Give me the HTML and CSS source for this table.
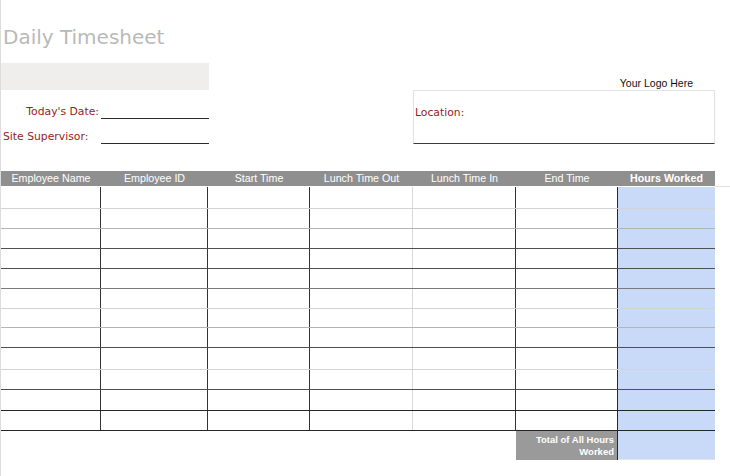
FILE: index.html
```html
<!DOCTYPE html>
<html lang="en">
<head>
<meta charset="utf-8">
<title>Daily Timesheet</title>
<link rel="stylesheet" href="styles.css">
</head>
<body>
<div class="page">
  <div class="top">
    <div class="left">
      <h1 class="title">Daily Timesheet</h1>
      <div class="graybar"></div>
      <div class="field field-date">
        <span class="label label-right">Today's Date:</span>
        <span class="line"></span>
      </div>
      <div class="field field-sup">
        <span class="label">Site Supervisor:</span>
        <span class="line"></span>
      </div>
    </div>
    <div class="right">
      <div class="logo">Your Logo Here</div>
      <div class="location"><span class="label">Location:</span></div>
    </div>
  </div>

  <div class="sheet">
    <div class="thead">
      <div class="cols head">
        <div>Employee Name</div>
        <div>Employee ID</div>
        <div>Start Time</div>
        <div>Lunch Time Out</div>
        <div>Lunch Time In</div>
        <div>End Time</div>
        <div class="bold">Hours Worked</div>
      </div>
      <div class="tail"></div>
    </div>

    <div class="cols row h22 ln-light"><div></div><div></div><div></div><div></div><div></div><div></div><div class="blue"></div></div>
    <div class="cols row ln-mid"><div></div><div></div><div></div><div></div><div></div><div></div><div class="blue"></div></div>
    <div class="cols row ln-dark"><div></div><div></div><div></div><div></div><div></div><div></div><div class="blue"></div></div>
    <div class="cols row ln-dark"><div></div><div></div><div></div><div></div><div></div><div></div><div class="blue"></div></div>
    <div class="cols row ln-mid2"><div></div><div></div><div></div><div></div><div></div><div></div><div class="blue"></div></div>
    <div class="cols row ln-light"><div></div><div></div><div></div><div></div><div></div><div></div><div class="blue"></div></div>
    <div class="cols row h19 ln-mid"><div></div><div></div><div></div><div></div><div></div><div></div><div class="blue"></div></div>
    <div class="cols row ln-dark"><div></div><div></div><div></div><div></div><div></div><div></div><div class="blue"></div></div>
    <div class="cols row h22 ln-light"><div></div><div></div><div></div><div></div><div></div><div></div><div class="blue"></div></div>
    <div class="cols row ln-dark"><div></div><div></div><div></div><div></div><div></div><div></div><div class="blue"></div></div>
    <div class="cols row h21 ln-black"><div></div><div></div><div></div><div></div><div></div><div></div><div class="blue"></div></div>
    <div class="cols row ln-black"><div></div><div></div><div></div><div></div><div></div><div></div><div class="blue"></div></div>

    <div class="cols total">
      <div></div><div></div><div></div><div></div><div></div>
      <div class="total-label">Total of All Hours<br>Worked</div>
      <div class="blue"></div>
    </div>
  </div>
</div>
</body>
</html>
```

FILE: styles.css
```css
* { box-sizing: border-box; }
html, body { margin: 0; padding: 0; background: #fff; }
body { font-family: "DejaVu Sans", Verdana, sans-serif; }

.page {
  width: 730px;
  height: 476px;
  border-left: 1px solid #dcdcdc;
  overflow: hidden;
}

.top { display: flex; padding-top: 25px; }
.left { width: 208px; }
.right { width: 302px; margin-left: 204px; margin-top: 52px; }

.title {
  margin: 0;
  padding-left: 2px;
  font-size: 20px;
  line-height: 24px;
  font-weight: normal;
  color: #b9b9b9;
  white-space: nowrap;
}

.graybar {
  margin-top: 14px;
  margin-left: -1px;
  width: 209px;
  height: 27px;
  background: #efeeec;
}

.field { display: flex; align-items: flex-end; height: 15px; }
.field-date { margin-top: 14px; }
.field-sup { margin-top: 10px; }

.label {
  color: #951c1c;
  font-size: 10.8px;
  line-height: 15px;
  white-space: nowrap;
}
.field .label { width: 98px; padding-left: 2px; }
.field .label-right { text-align: right; }
.field .line {
  margin-left: 2px;
  width: 108px;
  height: 15px;
  border-bottom: 1px solid #2a2a2a;
}

.logo {
  font-family: "Liberation Sans", Arial, sans-serif;
  font-size: 10.5px;
  line-height: 12px;
  text-align: right;
  padding-right: 22px;
  color: #111;
}
.location {
  margin-top: 1px;
  height: 54px;
  border: 1px solid #e2e2e2;
  border-bottom: 1px solid #3c3c3c;
  padding: 14px 0 0 1px;
  font-size: 10.8px;
  line-height: 15px;
}

.sheet { margin-top: 27px; font-family: "Liberation Sans", Arial, sans-serif; }

.cols {
  display: grid;
  grid-template-columns: 100px 107px 102px 103px 103px 102px 97px;
  width: 714px;
}

.thead { display: flex; }
.head {
  height: 15px;
  background: #8f8f8f;
  color: #fff;
  font-size: 10.7px;
  line-height: 15px;
  text-align: center;
  white-space: nowrap;
}
.head .bold { font-weight: bold; }
.tail { flex: 1; height: 16px; border-bottom: 1px solid #e0e0e0; }

.row { height: 20px; border-bottom: 1px solid #ccc; }
.row.h19 { height: 19px; }
.row.h21 { height: 21px; }
.row.h22 { height: 22px; }
.row > div { border-right: 1px solid #333; }
.row > div:nth-child(4) { border-right-color: #dadada; }
.row > div:nth-child(6) { border-right-color: #1b2942; }
.row > div:nth-child(7) { border-right: 0; }

.ln-light { border-bottom-color: #d3d3d3; }
.ln-mid { border-bottom-color: #b4b4b4; }
.ln-mid2 { border-bottom-color: #7a7a7a; }
.ln-dark { border-bottom-color: #505050; }
.ln-black { border-bottom-color: #262626; }

.blue { background: #c9daf8; }

.total { height: 29px; }
.total-label {
  background: #9a9a9a;
  color: #fff;
  font-weight: bold;
  font-size: 9.5px;
  line-height: 12px;
  text-align: right;
  padding: 3px 3px 0 0;
  border-right: 1px solid #1b2942;
  white-space: nowrap;
}
.total .blue { border-bottom: 1px solid #e4e4e4; }
```
